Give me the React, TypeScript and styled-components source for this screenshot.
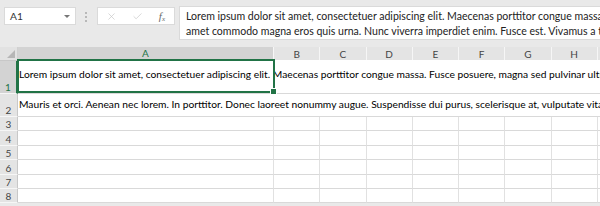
import React from "react";
import styled, { createGlobalStyle } from "styled-components";
import { X, Check } from "lucide-react";

const GlobalStyle = createGlobalStyle`
  html, body {
    margin: 0;
    padding: 0;
    background: #e9e9e9;
  }
  * { box-sizing: border-box; }
`;

const COLS = ["A", "B", "C", "D", "E", "F", "G", "H", "I"];
const TEMPLATE = "18px 256px repeat(8, 46.25px)";

const Sheet = styled.div`
  width: 600px;
  height: 206px;
  overflow: hidden;
  background: #e9e9e9;
  font-family: Lato, "Open Sans", sans-serif;
  font-size: 10.25px;
  color: #000;
`;

const Toolbar = styled.div`
  height: 47px;
  display: flex;
  align-items: flex-start;
  padding: 6px 0 0 4px;
`;

const NameBox = styled.div`
  width: 72px;
  height: 18px;
  margin-top: 1px;
  background: #fff;
  border: 1px solid #dadada;
  display: flex;
  align-items: center;
  justify-content: space-between;
  padding: 0 5px 0 5px;
  color: #333;
`;

const DropArrow = styled.span`
  width: 0;
  height: 0;
  border-left: 3px solid transparent;
  border-right: 3px solid transparent;
  border-top: 3px solid #777;
`;

const Grip = styled.div`
  width: 3px;
  margin: 6px 9px 0 9px;
  display: flex;
  flex-direction: column;
  gap: 2px;
  span {
    width: 2px;
    height: 2px;
    background: #b8b8b8;
  }
`;

const FormulaButtons = styled.div`
  width: 78px;
  height: 18px;
  margin-top: 1px;
  background: #fff;
  border: 1px solid #dadada;
  display: flex;
  align-items: center;
  justify-content: space-between;
  padding: 0 9px 0 8px;
  color: #c4c4c4;
`;

const Fx = styled.span`
  font-family: "Liberation Serif", serif;
  font-style: italic;
  font-size: 11px;
  color: #6a6a6a;
  sub {
    font-size: 7px;
    vertical-align: baseline;
    position: relative;
    top: 1px;
  }
`;

const FormulaBox = styled.div`
  flex: 1;
  height: 34px;
  margin-left: 4px;
  background: #fff;
  border: 1px solid #dadada;
  border-right: none;
  padding: 2px 0 0 6px;
  font-size: 10.55px;
  line-height: 15px;
  white-space: nowrap;
  overflow: hidden;
  color: #222;
`;

const Row = styled.div<{ $h: number }>`
  display: grid;
  grid-template-columns: ${TEMPLATE};
  height: ${(p) => p.$h}px;
`;

const Corner = styled.div`
  background: #e2e2e2;
  border-right: 1px solid #d0d0d0;
  border-bottom: 1px solid #c8c8c8;
  position: relative;
  &::after {
    content: "";
    position: absolute;
    right: 2px;
    bottom: 2px;
    border-left: 8px solid transparent;
    border-bottom: 8px solid #b6b6b6;
  }
`;

const ColHead = styled.div<{ $active?: boolean }>`
  background: ${(p) => (p.$active ? "#d3d3d3" : "#e4e4e4")};
  border-right: 1px solid #f6f6f6;
  border-bottom: ${(p) => (p.$active ? "2px solid #217346" : "1px solid #c8c8c8")};
  color: ${(p) => (p.$active ? "#217346" : "#444")};
  display: flex;
  align-items: center;
  justify-content: center;
  font-size: 10px;
`;

const RowHead = styled.div<{ $active?: boolean }>`
  background: ${(p) => (p.$active ? "#d3d3d3" : "#e4e4e4")};
  border-bottom: 1px solid #f6f6f6;
  border-right: ${(p) => (p.$active ? "2px solid #217346" : "1px solid #c8c8c8")};
  color: ${(p) => (p.$active ? "#217346" : "#444")};
  display: flex;
  align-items: flex-end;
  justify-content: center;
  font-size: 10px;
`;

const Cell = styled.div<{ $open?: boolean }>`
  background: #fff;
  border-right: ${(p) => (p.$open ? "none" : "1px solid #e1e1e1")};
  border-bottom: 1px solid #d9d9d9;
`;

const TextCell = styled.div<{ $top: number }>`
  background: #fff;
  border-bottom: 1px solid #d9d9d9;
  white-space: nowrap;
  overflow: visible;
  padding: ${(p) => p.$top}px 0 0 1px;
  position: relative;
  z-index: 1;
  line-height: 12px;
`;

const ActiveOutline = styled.div`
  position: absolute;
  left: -1px;
  top: -1px;
  width: 258px;
  height: calc(100% + 1px);
  border: 2px solid #217346;
  pointer-events: none;
  &::after {
    content: "";
    position: absolute;
    right: -4px;
    bottom: -4px;
    width: 5px;
    height: 5px;
    background: #217346;
    border: 1px solid #fff;
  }
`;

const rowHeights = [33.5, 23.5, 14.4, 14.4, 14.4, 14.4, 14.4, 14.4];

const texts: Record<number, { text: string; top: number }> = {
  1: {
    text:
      "Lorem ipsum dolor sit amet, consectetuer adipiscing elit. Maecenas porttitor congue massa. Fusce posuere, magna sed pulvinar ultricies, purus lectus malesuada libero, sit amet commodo magna eros quis urna.",
    top: 8,
  },
  2: {
    text:
      "Mauris et orci. Aenean nec lorem. In porttitor. Donec laoreet nonummy augue. Suspendisse dui purus, scelerisque at, vulputate vitae, pretium mattis, nunc.",
    top: 4,
  },
};

export default function App() {
  return (
    <Sheet>
      <GlobalStyle />
      <Toolbar>
        <NameBox>
          <span>A1</span>
          <DropArrow />
        </NameBox>
        <Grip>
          <span />
          <span />
          <span />
        </Grip>
        <FormulaButtons>
          <X size={11} strokeWidth={1.4} />
          <Check size={11} strokeWidth={1.4} />
          <Fx>
            f<sub>x</sub>
          </Fx>
        </FormulaButtons>
        <FormulaBox>
          Lorem ipsum dolor sit amet, consectetuer adipiscing elit. Maecenas porttitor congue massa. Fusce posuere, magna sed pulvinar ultricies, purus lectus malesuada libero, sit
          <br />
          amet commodo magna eros quis urna. Nunc viverra imperdiet enim. Fusce est. Vivamus a tellus.
        </FormulaBox>
      </Toolbar>

      <Row $h={13}>
        <Corner />
        {COLS.map((c) => (
          <ColHead key={c} $active={c === "A"}>
            {c}
          </ColHead>
        ))}
      </Row>

      {rowHeights.map((h, i) => {
        const n = i + 1;
        const t = texts[n];
        return (
          <Row key={n} $h={h}>
            <RowHead $active={n === 1}>{n}</RowHead>
            {t ? (
              <>
                <TextCell $top={t.top}>
                  {t.text}
                  {n === 1 && <ActiveOutline />}
                </TextCell>
                {COLS.slice(1).map((c) => (
                  <Cell key={c} $open />
                ))}
              </>
            ) : (
              COLS.map((c) => <Cell key={c} />)
            )}
          </Row>
        );
      })}
    </Sheet>
  );
}
